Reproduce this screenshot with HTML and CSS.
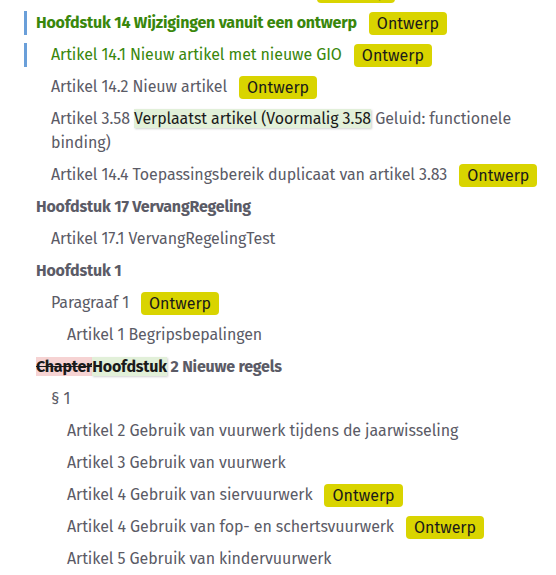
FILE: index.html
```html
<!DOCTYPE html>
<html lang="nl">
<head>
<meta charset="utf-8">
<link rel="stylesheet" href="styles.css">
</head>
<body>
<ul class="toc">
  <li class="row l1"><span class="txt">Artikel 13.10 Gewijzigd artikel vanuit</span><span class="badge">Ontwerp</span></li>
  <li class="row l0 marked new head"><span class="txt">Hoofdstuk 14 Wijzigingen vanuit een ontwerp</span><span class="badge">Ontwerp</span></li>
  <li class="row l1 marked new"><span class="txt">Artikel 14.1 Nieuw artikel met nieuwe GIO</span><span class="badge">Ontwerp</span></li>
  <li class="row l1"><span class="txt">Artikel 14.2 Nieuw artikel</span><span class="badge">Ontwerp</span></li>
  <li class="row l1"><span class="txt">Artikel 3.58 <ins class="ins shadow">Verplaatst artikel (Voormalig 3.58</ins> Geluid: functionele binding)</span></li>
  <li class="row l1"><span class="txt nowrap">Artikel 14.4 Toepassingsbereik duplicaat van artikel 3.83</span><span class="badge">Ontwerp</span></li>
  <li class="row l0 head"><span class="txt">Hoofdstuk 17 VervangRegeling</span></li>
  <li class="row l1"><span class="txt">Artikel 17.1 VervangRegelingTest</span></li>
  <li class="row l0 head"><span class="txt">Hoofdstuk 1</span></li>
  <li class="row l1"><span class="txt">Paragraaf 1</span><span class="badge">Ontwerp</span></li>
  <li class="row l2"><span class="txt">Artikel 1 Begripsbepalingen</span></li>
  <li class="row l0 head"><span class="txt"><del class="del">Chapter</del><ins class="ins shadow">Hoofdstuk</ins> 2 Nieuwe regels</span></li>
  <li class="row l1"><span class="txt">§ 1</span></li>
  <li class="row l2"><span class="txt">Artikel 2 Gebruik van vuurwerk tijdens de jaarwisseling</span></li>
  <li class="row l2"><span class="txt">Artikel 3 Gebruik van vuurwerk</span></li>
  <li class="row l2"><span class="txt">Artikel 4 Gebruik van siervuurwerk</span><span class="badge">Ontwerp</span></li>
  <li class="row l2"><span class="txt">Artikel 4 Gebruik van fop- en schertsvuurwerk</span><span class="badge">Ontwerp</span></li>
  <li class="row l2"><span class="txt">Artikel 5 Gebruik van kindervuurwerk</span></li>
</ul>
</body>
</html>
```
FILE: styles.css
```css
html, body {
  margin: 0;
  padding: 0;
  background: #ffffff;
}
body {
  font-family: "Fira Sans", "Lato", "Noto Sans", sans-serif;
  font-size: 16px;
  color: #5b5b66;
  overflow: hidden;
}
.toc {
  list-style: none;
  margin: -21px 0 0 24px;
  padding: 0;
  display: flex;
  flex-direction: column;
  gap: 8px;
}
.row {
  display: flex;
  align-items: center;
  line-height: 24px;
  border-left: 3px solid transparent;
  letter-spacing: -0.1px;
}
.l0 { padding-left: 9px; }
.l1 { padding-left: 24px; }
.l2 { padding-left: 40px; }
.marked { border-left-color: #6a9fd9; }
.head { font-weight: 700; letter-spacing: -0.2px; }
.new { color: #39870c; }
.nowrap { white-space: nowrap; }
.badge {
  flex: none;
  margin-left: 12px;
  background: #d9d400;
  color: #1a1a1a;
  font-weight: 400;
  letter-spacing: 0;
  line-height: 23px;
  padding: 0 8px;
  border-radius: 4px;
}
.ins {
  text-decoration: none;
  background: #e2f0d9;
  color: #1a1a1a;
}
.shadow { box-shadow: 1px 1px 2px rgba(0,0,0,0.18); }
.del {
  background: #f6d3d3;
  color: #1a1a1a;
  text-decoration: line-through;
}
```
